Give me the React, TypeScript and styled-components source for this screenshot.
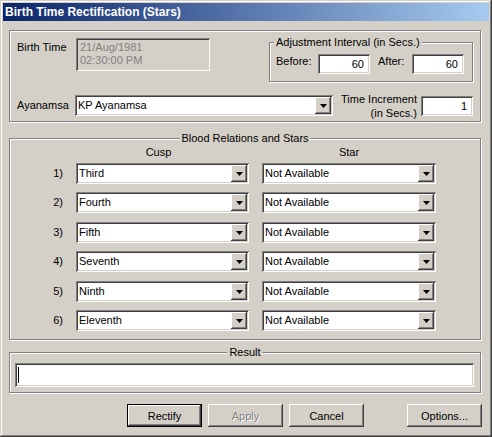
import React from "react";
import styled, { createGlobalStyle, css } from "styled-components";

const FACE = "#D4D0C8";

const cusps = ["Third", "Fourth", "Fifth", "Seventh", "Ninth", "Eleventh"];

const GlobalStyle = createGlobalStyle`
  html, body {
    margin: 0;
    padding: 0;
    background: #fff;
  }
  body {
    font-family: "Liberation Sans", Arial, sans-serif;
    font-size: 11px;
    color: #000;
  }
  * {
    box-sizing: border-box;
  }
`;

const sunken = css`
  box-shadow: inset 1px 1px #808080, inset -1px -1px #fff, inset 2px 2px #404040,
    inset -2px -2px ${FACE};
`;

const raised = css`
  box-shadow: inset -1px -1px #404040, inset 1px 1px #fff, inset -2px -2px #808080;
`;

function DropArrow() {
  return (
    <svg width="7" height="4" viewBox="0 0 7 4">
      <polygon points="0,0 7,0 3.5,4" fill="#000" />
    </svg>
  );
}

function Combo({ value, width }: { value: string; width: number }) {
  return (
    <ComboBox $w={width}>
      <ComboText>{value}</ComboText>
      <ComboButton>
        <DropArrow />
      </ComboButton>
    </ComboBox>
  );
}

export default function App() {
  return (
    <>
      <GlobalStyle />
      <Window>
        <TitleBar>Birth Time Rectification (Stars)</TitleBar>
        <Body>
          <Group $h={92} $pad="7px 7px 0 7px">
            <TopRow>
              <FieldLabel $w={59}>Birth Time</FieldLabel>
              <BirthBox>
                <span>21/Aug/1981</span>
                <span>02:30:00 PM</span>
              </BirthBox>
              <AdjustGroup>
                <Legend>Adjustment Interval (in Secs.)</Legend>
                <AdjustLabel $w={42}>Before:</AdjustLabel>
                <NumField $w={52} $h={20}>60</NumField>
                <AdjustLabel $w={34} $ml={8}>After:</AdjustLabel>
                <NumField $w={52} $h={20}>60</NumField>
              </AdjustGroup>
            </TopRow>
            <MidRow>
              <FieldLabel $w={58} $top={0}>Ayanamsa</FieldLabel>
              <Combo value="KP Ayanamsa" width={258} />
              <IncLabel>
                Time Increment
                <br />
                (in Secs.)
              </IncLabel>
              <NumField $w={52} $h={20}>1</NumField>
            </MidRow>
          </Group>

          <Group $h={202} $mt={16} $pad="6px 0 0 0">
            <Legend $center>Blood Relations and Stars</Legend>
            <StarGrid>
              <span />
              <ColHead $shift={8}>Cusp</ColHead>
              <ColHead $shift={0}>Star</ColHead>
            </StarGrid>
            <StarRows>
              {cusps.map((c, i) => (
                <React.Fragment key={c}>
                  <RowNum>{i + 1})</RowNum>
                  <Combo value={c} width={173} />
                  <Combo value="Not Available" width={174} />
                </React.Fragment>
              ))}
            </StarRows>
          </Group>

          <Group $h={41} $mt={12} $pad="10px 6px 0 5px">
            <Legend $center>Result</Legend>
            <ResultField>
              <Caret />
            </ResultField>
          </Group>

          <ButtonRow>
            <span />
            <ButtonSet>
              <Button $default>Rectify</Button>
              <Button disabled>Apply</Button>
              <Button>Cancel</Button>
            </ButtonSet>
            <Button $end>Options...</Button>
          </ButtonRow>
        </Body>
      </Window>
    </>
  );
}

const Window = styled.div`
  width: 492px;
  height: 437px;
  padding: 3px;
  background: ${FACE};
  box-shadow: inset -1px -1px #404040, inset 1px 1px ${FACE}, inset -2px -2px #808080,
    inset 2px 2px #fff;
  display: flex;
  flex-direction: column;
`;

const TitleBar = styled.div`
  height: 18px;
  padding-left: 2px;
  display: flex;
  align-items: center;
  background: linear-gradient(to right, #0a246a, #a6caf0);
  color: #fff;
  font-weight: bold;
  font-size: 12px;
  white-space: nowrap;
`;

const Body = styled.div`
  padding: 9px 8px 0 6px;
  display: flex;
  flex-direction: column;
`;

const Group = styled.div<{ $h: number; $mt?: number; $pad: string }>`
  position: relative;
  height: ${(p) => p.$h}px;
  margin-top: ${(p) => p.$mt ?? 0}px;
  padding: ${(p) => p.$pad};
  border: 1px solid #808080;
  box-shadow: inset 1px 1px #fff, 1px 1px #fff;
`;

const Legend = styled.span<{ $center?: boolean }>`
  position: absolute;
  top: -7px;
  left: ${(p) => (p.$center ? "50%" : "4px")};
  transform: ${(p) => (p.$center ? "translateX(-50%)" : "none")};
  padding: 0 2px;
  line-height: 13px;
  background: ${FACE};
  white-space: nowrap;
`;

const TopRow = styled.div`
  display: flex;
  align-items: flex-start;
  height: 45px;
`;

const FieldLabel = styled.div<{ $w: number; $top?: number }>`
  width: ${(p) => p.$w}px;
  flex: none;
  padding-top: ${(p) => p.$top ?? 3}px;
  line-height: 13px;
  white-space: nowrap;
`;

const BirthBox = styled.div`
  ${sunken};
  width: 134px;
  height: 33px;
  padding: 3px 4px;
  display: flex;
  flex-direction: column;
  line-height: 13px;
  color: #808080;
  background: ${FACE};
`;

const AdjustGroup = styled.div`
  position: relative;
  margin-left: auto;
  margin-top: 4px;
  width: 204px;
  height: 40px;
  padding: 11px 0 0 6px;
  display: flex;
  align-items: flex-start;
  border: 1px solid #808080;
  box-shadow: inset 1px 1px #fff, 1px 1px #fff;
`;

const AdjustLabel = styled.div<{ $w: number; $ml?: number }>`
  width: ${(p) => p.$w}px;
  margin-left: ${(p) => p.$ml ?? 0}px;
  padding-top: 1px;
  line-height: 13px;
`;

const NumField = styled.div<{ $w: number; $h: number }>`
  ${sunken};
  width: ${(p) => p.$w}px;
  height: ${(p) => p.$h}px;
  padding: 0 6px 0 3px;
  background: #fff;
  display: flex;
  align-items: center;
  justify-content: flex-end;
  flex: none;
`;

const MidRow = styled.div`
  display: flex;
  align-items: center;
  margin-top: 12px;
  height: 21px;
`;

const IncLabel = styled.div`
  margin-left: auto;
  margin-right: 4px;
  text-align: right;
  line-height: 14px;
  white-space: nowrap;
`;

const ComboBox = styled.div<{ $w: number }>`
  ${sunken};
  width: ${(p) => p.$w}px;
  height: 21px;
  padding: 2px;
  display: flex;
  background: #fff;
  flex: none;
`;

const ComboText = styled.div`
  flex: 1;
  padding-left: 1px;
  line-height: 17px;
  white-space: nowrap;
  overflow: hidden;
`;

const ComboButton = styled.div`
  ${raised};
  width: 16px;
  height: 17px;
  background: ${FACE};
  display: flex;
  align-items: center;
  justify-content: center;
  padding-top: 1px;
`;

const StarGrid = styled.div`
  display: grid;
  grid-template-columns: 53px 173px 174px;
  column-gap: 13px;
  height: 14px;
`;

const ColHead = styled.div<{ $shift: number }>`
  text-align: center;
  line-height: 14px;
  padding-right: ${(p) => p.$shift}px;
`;

const StarRows = styled.div`
  display: grid;
  grid-template-columns: 53px 173px 174px;
  grid-auto-rows: 21px;
  column-gap: 13px;
  row-gap: 8.4px;
  margin-top: 4px;
`;

const RowNum = styled.div`
  align-self: center;
  text-align: right;
  line-height: 13px;
`;

const ResultField = styled.div`
  ${sunken};
  height: 24px;
  padding-left: 3px;
  display: flex;
  align-items: center;
  background: #fff;
`;

const Caret = styled.span`
  width: 1px;
  height: 16px;
  background: #000;
`;

const ButtonRow = styled.div`
  display: grid;
  grid-template-columns: 1fr auto 1fr;
  margin-top: 11px;
  margin-right: -1px;
`;

const ButtonSet = styled.div`
  display: flex;
  gap: 6px;
`;

const Button = styled.button<{ $default?: boolean; $end?: boolean }>`
  width: 75px;
  height: 23px;
  padding: 0;
  border: none;
  background: ${FACE};
  font-family: "Liberation Sans", Arial, sans-serif;
  font-size: 11px;
  color: #000;
  justify-self: ${(p) => (p.$end ? "end" : "auto")};
  ${raised};
  ${(p) =>
    p.$default &&
    css`
      box-shadow: inset 0 0 0 1px #000, inset -2px -2px #404040, inset 2px 2px #fff,
        inset -3px -3px #808080;
    `}

  &:disabled {
    color: #808080;
    text-shadow: 1px 1px #fff;
  }
`;
